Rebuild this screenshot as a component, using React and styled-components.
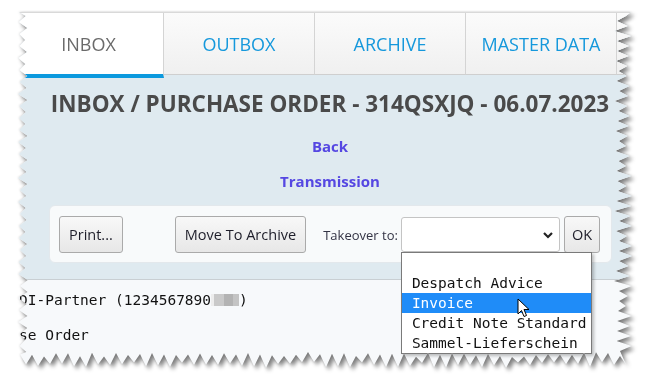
import React from 'react';
import styled, { createGlobalStyle } from 'styled-components';

const PAGE_W = 632;
const PAGE_H = 356;

// torn paper outline, seeded so it looks the same on every render
const makeTear = () => {
  let seed = 11;
  const rnd = () => {
    seed = (seed * 16807) % 2147483647;
    return (seed - 1) / 2147483646;
  };
  const pts = [];
  pts.push([5, 0]);
  pts.push([617, 0]);
  for (let y = 4, i = 0; y < PAGE_H - 12; y += 5, i++) {
    const x = i % 2 ? 600 + rnd() * 6 : 612 + rnd() * 6;
    pts.push([x, y]);
  }
  for (let x = 612, i = 0; x > 0; x -= 6, i++) {
    const y = i % 2 ? 340 + rnd() * 5 : 350 + rnd() * 6;
    pts.push([x, y]);
  }
  for (let y = PAGE_H - 16, i = 0; y > 0; y -= 6, i++) {
    const x = i % 2 ? 4 + rnd() * 2 : 11 + rnd() * 3;
    pts.push([x, y]);
  }
  return `polygon(${pts.map(([x, y]) => `${x.toFixed(1)}px ${y.toFixed(1)}px`).join(', ')})`;
};

const TEAR = makeTear();

const GlobalStyle = createGlobalStyle`
  body {
    margin: 0;
    background: #ffffff;
  }
`;

const Stage = styled.div`
  width: 649px;
  height: 380px;
  overflow: hidden;
  padding: 12px 0 0 14px;
  box-sizing: border-box;
`;

const Shadow = styled.div`
  width: ${PAGE_W}px;
  filter: drop-shadow(3px 3px 2px rgba(0, 0, 0, 0.45)) drop-shadow(0 0 1px rgba(0, 0, 0, 0.2));
`;

const Page = styled.div`
  width: ${PAGE_W}px;
  height: ${PAGE_H}px;
  background: #f7f9fb;
  clip-path: ${(p) => p.$clip};
  font-family: "Open Sans", "Noto Sans", sans-serif;
  display: flex;
  flex-direction: column;
`;

const TabBar = styled.div`
  display: flex;
  align-items: flex-start;
  border-top: 1px solid #d9d9d9;
  background: #dfeaf0;
`;

const Tab = styled.div`
  width: 150px;
  height: 61px;
  flex-shrink: 0;
  box-sizing: content-box;
  display: flex;
  align-items: center;
  justify-content: center;
  border-right: 1px solid #d4d4d4;
  font-size: 18px;
  color: ${(p) => (p.$active ? '#6a6a6a' : '#1598dc')};
  background: ${(p) => (p.$active ? '#ffffff' : 'linear-gradient(#fbfbfb, #f0f0f0)')};
  border-bottom: ${(p) => (p.$active ? '4px solid #0b99de' : '1px solid #cfcfcf')};
  &:first-child {
    width: 149px;
  }
`;

const TabFill = styled.div`
  flex: 1;
  height: 61px;
  background: linear-gradient(#fbfbfb, #f0f0f0);
  border-bottom: 1px solid #cfcfcf;
`;

const Main = styled.div`
  background: #dfeaf0;
  padding: 10px 0 16px;
  display: flex;
  flex-direction: column;
  align-items: center;
  border-bottom: 1px solid #c9cfd3;
`;

const Title = styled.h1`
  margin: 0;
  font-size: 22.5px;
  line-height: 32px;
  font-weight: 700;
  color: #4a4a4a;
  white-space: nowrap;
`;

const NavLink = styled.a`
  display: block;
  margin-top: ${(p) => p.$gap}px;
  font-size: 15px;
  line-height: 20px;
  font-weight: 700;
  color: #5547e2;
  text-decoration: none;
`;

const Panel = styled.div`
  align-self: stretch;
  margin: 14px 34px 0 35px;
  padding: 10px 10px 9px 9px;
  background: #f8fafb;
  border: 1px solid #e3e8ec;
  border-radius: 6px;
  display: flex;
  align-items: center;
`;

const Button = styled.button`
  height: 37px;
  flex-shrink: 0;
  white-space: nowrap;
  padding: 0 ${(p) => p.$pad || 9}px;
  margin-right: ${(p) => p.$after || 0}px;
  background: linear-gradient(#f8f8f8, #e7e7e7);
  border: 1px solid #aaaaaa;
  border-radius: 3px;
  font-family: "Open Sans", "Noto Sans", sans-serif;
  font-size: 14.5px;
  color: #1e1e2a;
  cursor: pointer;
`;

const Label = styled.span`
  flex-shrink: 0;
  white-space: nowrap;
  font-size: 13px;
  color: #333344;
  margin-right: 3px;
`;

const SelectWrap = styled.div`
  position: relative;
  flex-shrink: 0;
  margin-right: 4px;
`;

const SelectBox = styled.div`
  width: 159px;
  height: 35px;
  box-sizing: border-box;
  background: #ffffff;
  border: 1px solid #c4c4c4;
  border-radius: 3px;
  display: flex;
  align-items: center;
  justify-content: flex-end;
  padding-right: 4px;
`;

const DropList = styled.ul`
  position: absolute;
  top: 35px;
  left: 0;
  width: 189px;
  margin: 0;
  padding: 0;
  list-style: none;
  background: #ffffff;
  border: 1px solid #7a7a7a;
  box-shadow: 2px 2px 3px rgba(0, 0, 0, 0.25);
  z-index: 5;
`;

const Option = styled.li`
  height: 20px;
  line-height: 20px;
  padding-left: 10px;
  font-family: "DejaVu Sans Mono", "Liberation Mono", monospace;
  font-size: 14.5px;
  white-space: nowrap;
  color: ${(p) => (p.$selected ? '#ffffff' : '#111111')};
  background: ${(p) => (p.$selected ? '#1f8cf8' : 'transparent')};
`;

const Cursor = styled.svg`
  position: absolute;
  left: 116px;
  top: 81px;
  z-index: 6;
`;

const Details = styled.div`
  padding: 3px 0 0 5px;
  font-family: "DejaVu Sans Mono", "Liberation Mono", monospace;
  font-size: 14.5px;
  color: #111111;
`;

const Line = styled.div`
  height: 35px;
  line-height: 35px;
  white-space: pre;
`;

const Redacted = styled.span`
  display: inline-block;
  width: 28px;
  height: 12px;
  vertical-align: -1px;
  background: linear-gradient(to right, #ededed 0 12%, #c9c9c9 12% 45%, #b3b3b3 45% 78%, #c4c4c4 78%);
`;

const Chevron = () => (
  <svg width="14" height="14" viewBox="0 0 14 14">
    <path d="M3 5 L7 9 L11 5" fill="none" stroke="#222" strokeWidth="2.2" />
  </svg>
);

const options = ['', 'Despatch Advice', 'Invoice', 'Credit Note Standard', 'Sammel-Lieferschein'];
const tabs = ['INBOX', 'OUTBOX', 'ARCHIVE', 'MASTER DATA'];

const App = () => {
  return (
    <Stage>
      <GlobalStyle />
      <Shadow>
        <Page $clip={TEAR}>
          <TabBar>
            {tabs.map((t, i) => (
              <Tab key={t} $active={i === 0}>{t}</Tab>
            ))}
            <TabFill />
          </TabBar>

          <Main>
            <Title>INBOX / PURCHASE ORDER - 314QSXJQ - 06.07.2023</Title>
            <NavLink href="#" $gap={16}>Back</NavLink>
            <NavLink href="#" $gap={15}>Transmission</NavLink>

            <Panel>
              <Button $after={52}>Print...</Button>
              <Button $after={17}>Move To Archive</Button>
              <Label>Takeover to:</Label>
              <SelectWrap>
                <SelectBox>
                  <Chevron />
                </SelectBox>
                <DropList>
                  {options.map((o, i) => (
                    <Option key={i} $selected={o === 'Invoice'}>{o}</Option>
                  ))}
                </DropList>
                <Cursor width="14" height="21" viewBox="0 0 14 21">
                  <path
                    d="M1 1 L1 16 L4.5 12.5 L7 18.5 L9.5 17.5 L7 11.5 L12 11.5 Z"
                    fill="#ffffff"
                    stroke="#000000"
                    strokeWidth="1"
                    strokeLinejoin="round"
                  />
                </Cursor>
              </SelectWrap>
              <Button $pad={7}>OK</Button>
            </Panel>
          </Main>

          <Details>
            <Line>DI-Partner (1234567890<Redacted />)</Line>
            <Line>se Order</Line>
          </Details>
        </Page>
      </Shadow>
    </Stage>
  );
};

export default App;
